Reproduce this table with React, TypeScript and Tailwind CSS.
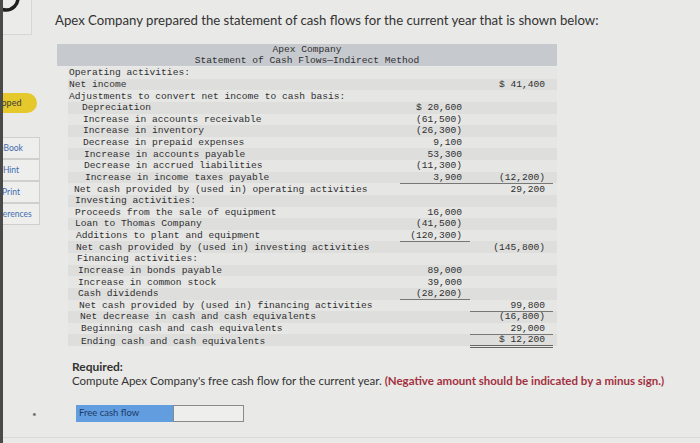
import React from "react";

type Row = {
  label: string;
  pl: string;
  c1?: string;
  c2?: string;
  u1?: boolean;
  u2?: boolean;
  dbl?: boolean;
};

const rows: Row[] = [
  { label: "Operating activities:", pl: "pl-[1px]" },
  { label: "Net income", pl: "pl-[1px]", c2: "$ 41,400" },
  { label: "Adjustments to convert net income to cash basis:", pl: "pl-[1px]" },
  { label: "Depreciation", pl: "pl-[14px]", c1: "$ 20,600" },
  { label: "Increase in accounts receivable", pl: "pl-[15px]", c1: "(61,500)" },
  { label: "Increase in inventory", pl: "pl-[15px]", c1: "(26,300)" },
  { label: "Decrease in prepaid expenses", pl: "pl-[15px]", c1: "9,100" },
  { label: "Increase in accounts payable", pl: "pl-[16px]", c1: "53,300" },
  { label: "Decrease in accrued liabilities", pl: "pl-[16px]", c1: "(11,300)" },
  { label: "Increase in income taxes payable", pl: "pl-[17px]", c1: "3,900", c2: "(12,200)", u1: true, u2: true },
  { label: "Net cash provided by (used in) operating activities", pl: "pl-[6px]", c2: "29,200" },
  { label: "Investing activities:", pl: "pl-[7px]" },
  { label: "Proceeds from the sale of equipment", pl: "pl-[7px]", c1: "16,000" },
  { label: "Loan to Thomas Company", pl: "pl-[7px]", c1: "(41,500)" },
  { label: "Additions to plant and equipment", pl: "pl-[8px]", c1: "(120,300)", u1: true },
  { label: "Net cash provided by (used in) investing activities", pl: "pl-[8px]", c2: "(145,800)" },
  { label: "Financing activities:", pl: "pl-[9px]" },
  { label: "Increase in bonds payable", pl: "pl-[10px]", c1: "89,000" },
  { label: "Increase in common stock", pl: "pl-[10px]", c1: "39,000" },
  { label: "Cash dividends", pl: "pl-[10px]", c1: "(28,200)", u1: true },
  { label: "Net cash provided by (used in) financing activities", pl: "pl-[11px]", c2: "99,800", u2: true },
  { label: "Net decrease in cash and cash equivalents", pl: "pl-[12px]", c2: "(16,800)" },
  { label: "Beginning cash and cash equivalents", pl: "pl-[13px]", c2: "29,000", u2: true },
  { label: "Ending cash and cash equivalents", pl: "pl-[13px]", c2: "$ 12,200", dbl: true },
];

function SideButton({ label }: { label: string }) {
  return (
    <div className="h-[22px] w-[58px] border border-[#cfcfcf] bg-[#eeeeec] flex items-center justify-center text-[8.5px] text-[#3f6db0]">
      {label}
    </div>
  );
}

export default function App() {
  return (
    <div className="w-[700px] h-[443px] bg-[#e9e9e7] flex overflow-hidden font-['Lato',sans-serif] text-[#333]">
      <div className="w-[3px] h-full bg-[#4a4a4a] shrink-0" />
      <div className="flex-1 flex flex-col">
        <div className="flex flex-1">
          {/* sidebar */}
          <aside className="w-[38px] shrink-0 overflow-hidden flex flex-col">
            <div className="w-[29px] h-[35px] border-r border-b border-[#d6d6d4] bg-[#ebebe9]">
              <svg width="29" height="35" viewBox="0 0 29 35">
                <path d="M -9 -2 A 12 12 0 0 0 15 -2" fill="none" stroke="#1f1f1f" strokeWidth="3.5" />
              </svg>
            </div>
            <div className="mt-[58px] h-[20px] w-[34px] bg-[#e5c82c] rounded-r-full overflow-hidden flex items-center">
              <span className="ml-[-13px] text-[9px] text-[#3a3a3a] whitespace-nowrap">Skipped</span>
            </div>
            <div className="mt-[24px] ml-[-21px] flex flex-col">
              <SideButton label="eBook" />
              <SideButton label="Hint" />
              <SideButton label="Print" />
              <SideButton label="References" />
            </div>
          </aside>

          {/* main */}
          <main className="flex-1 pl-[14px] pt-[12px]">
            <p className="text-[13.2px] leading-[16px] text-[#333] whitespace-nowrap">
              Apex Company prepared the statement of cash flows for the current year that is shown below:
            </p>

            <div className="ml-[2px] mt-[16px] w-[500px] font-['Liberation_Mono',monospace] text-[9.6px] text-[#2f2f2f]">
              <div className="h-[22px] bg-[#c6c9ce] flex flex-col items-center justify-center leading-[11px]">
                <div>Apex Company</div>
                <div>Statement of Cash Flows—Indirect Method</div>
              </div>
              <div className="ml-[11px] mt-[1px] w-[489px]">
                {rows.map((r, i) => (
                  <div
                    key={i}
                    className={`h-[11.63px] grid grid-cols-[332px_70px_87px] items-center leading-[11px] whitespace-nowrap ${
                      i % 2 === 1 ? "bg-[#dededd]" : "bg-[#e6e6e5]"
                    }`}
                  >
                    <div className={r.pl}>{r.label}</div>
                    <div className={`h-full flex items-center justify-end pr-[8px] ${r.u1 ? "border-b border-[#777]" : ""}`}>
                      {r.c1 ?? ""}
                    </div>
                    <div className="h-full pr-[4px]">
                      <div
                        className={`h-full flex items-center justify-end pr-[8px] ${
                          r.u2 ? "border-b border-[#777]" : ""
                        } ${r.dbl ? "border-b-[3px] border-double border-[#666]" : ""}`}
                      >
                        {r.c2 ?? ""}
                      </div>
                    </div>
                  </div>
                ))}
              </div>
            </div>

            <div className="ml-[17px] mt-[14px] text-[11.5px] leading-[14px]">
              <div className="font-bold text-[12px]">Required:</div>
              <div className="whitespace-nowrap">
                Compute Apex Company's free cash flow for the current year.{" "}
                <span className="font-bold text-[#a3303f]">(Negative amount should be indicated by a minus sign.)</span>
              </div>
            </div>

            <div className="mt-[17px] flex items-center">
              <span className="ml-[-23px] w-[4px] text-[8px] text-[#777]">•</span>
              <div className="ml-[40px] flex">
                <div className="w-[97px] h-[17px] bg-[#619ddf] text-[9.5px] text-[#1d3b68] flex items-center pl-[3px]">
                  Free cash flow
                </div>
                <div className="w-[71px] h-[17px] bg-[#eeeeed] border border-[#8a8a8a]" />
              </div>
            </div>
          </main>
        </div>
        <div className="h-[6px] border-t border-[#d9d9d7]" />
      </div>
    </div>
  );
}
